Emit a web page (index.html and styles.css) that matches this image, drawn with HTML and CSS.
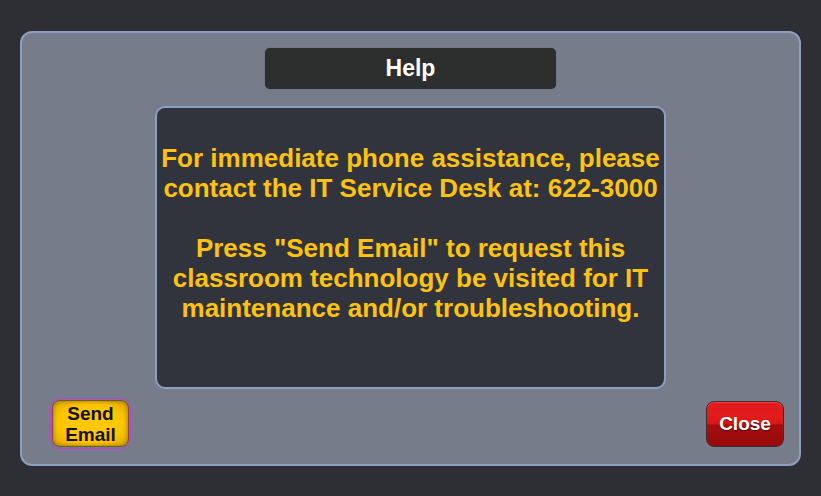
FILE: index.html
```html
<!DOCTYPE html>
<html>
<head>
<meta charset="utf-8">
<link rel="stylesheet" href="styles.css">
</head>
<body>
<div class="panel">
  <div class="title">Help</div>
  <div class="content">
    <div class="message">
      <p>For immediate phone assistance, please<br>contact the IT Service Desk at: 622-3000</p>
      <p>Press "Send Email" to request this<br>classroom technology be visited for IT<br>maintenance and/or troubleshooting.</p>
    </div>
  </div>
  <div class="actions">
    <button class="btn btn-email">Send<br>Email</button>
    <button class="btn btn-close">Close</button>
  </div>
</div>
</body>
</html>
```
FILE: styles.css
```css
html, body {
  margin: 0;
  height: 100%;
}
body {
  background: #2d2f35;
  padding: 31px 20px 30px 20px;
  box-sizing: border-box;
  font-family: "Liberation Sans", Arial, sans-serif;
}
.panel {
  box-sizing: border-box;
  width: 781px;
  height: 435px;
  background: #777c8b;
  border: 2px solid #8c9fc0;
  border-radius: 12px;
  display: flex;
  flex-direction: column;
  align-items: center;
}
.title {
  margin-top: 15px;
  width: 291px;
  height: 41px;
  background: #2d2e2e;
  border-radius: 5px;
  color: #ffffff;
  font-weight: bold;
  font-size: 23px;
  display: flex;
  align-items: center;
  justify-content: center;
  box-shadow: 0 0 1px rgba(0,0,0,0.4);
}
.content {
  box-sizing: border-box;
  margin-top: 17px;
  width: 511px;
  height: 283px;
  background: #31343c;
  border: 2px solid #8c9fc0;
  border-radius: 10px;
  display: flex;
  align-items: center;
  justify-content: center;
}
.message {
  color: #fec20f;
  font-weight: bold;
  font-size: 26px;
  line-height: 30px;
  text-align: center;
  padding-bottom: 30px;
  white-space: nowrap;
}
.message p {
  margin: 0;
}
.message p + p {
  margin-top: 30px;
}
.actions {
  align-self: stretch;
  display: flex;
  justify-content: space-between;
  align-items: flex-start;
  margin-top: 11px;
  padding: 0 15px 0 30px;
}
.btn {
  font-family: "Liberation Sans", Arial, sans-serif;
  font-weight: bold;
  font-size: 19px;
  border-radius: 8px;
  padding: 0;
  cursor: pointer;
}
.btn-email {
  width: 77px;
  height: 47px;
  line-height: 21px;
  color: #111111;
  background: radial-gradient(ellipse at center, #ffc90a 0%, #ffc500 60%, #d8a200 100%);
  border: 1px solid #6b5a2a;
  box-shadow: inset 0 0 4px rgba(120, 80, 0, 0.7);
  outline: 1px solid #c23fd3;
  outline-offset: 1px;
}
.btn-close {
  margin-top: 1px;
  width: 78px;
  height: 46px;
  color: #ffffff;
  text-shadow: 0 1px 1px rgba(0,0,0,0.5);
  background: linear-gradient(to bottom, #e01a1a 0%, #e31d1d 30%, #d81515 50%, #a50d0d 52%, #980a0a 100%);
  border: 1px solid #3b2b2b;
  box-shadow: inset 0 1px 1px rgba(255,120,120,0.5);
}
```
